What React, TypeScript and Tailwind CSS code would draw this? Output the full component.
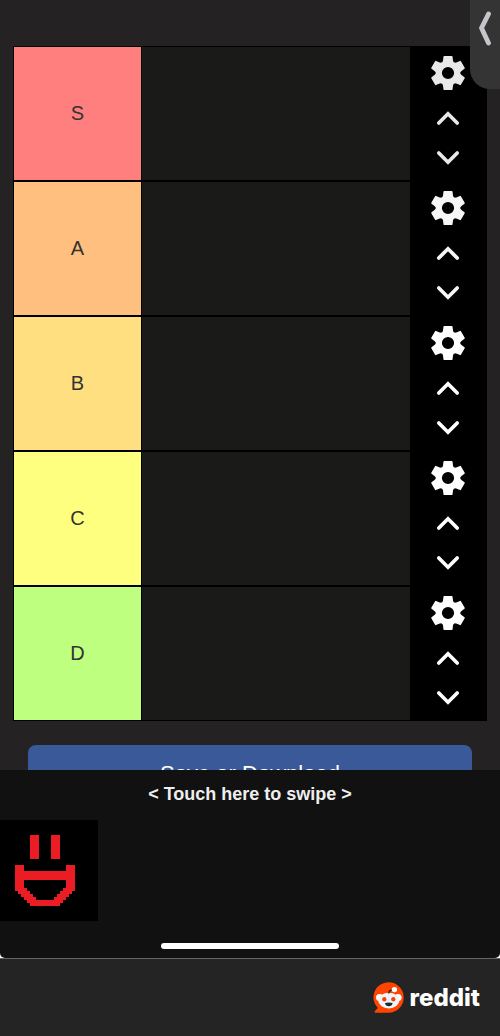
interface Tier {
  name: string
  color: string
  iconColor: string
}

const TIERS: Tier[] = [
  { name: 'S', color: 'bg-[#ff7f7e]', iconColor: 'text-[#e9e9e9]' },
  { name: 'A', color: 'bg-[#ffbf7f]', iconColor: 'text-[#f6f6f6]' },
  { name: 'B', color: 'bg-[#ffdf80]', iconColor: 'text-white' },
  { name: 'C', color: 'bg-[#feff7f]', iconColor: 'text-white' },
  { name: 'D', color: 'bg-[#beff7f]', iconColor: 'text-white' },
]

const GEAR_TEETH = [0, 60, 120, 180, 240, 300]

function Gear() {
  return (
    <svg width="42" height="42" viewBox="-21 -21 42 42" fill="currentColor">
      <circle r="9.2" fill="none" stroke="currentColor" strokeWidth="6.2" />
      {GEAR_TEETH.map((angle) => (
        <path
          key={angle}
          transform={`rotate(${angle})`}
          d="M-3.8 -17.1H3.8Q4.4 -17.1 4.5 -16.4L5 -12.4L6 -9.5H-6L-5 -12.4L-4.5 -16.4Q-4.4 -17.1 -3.8 -17.1Z"
        />
      ))}
    </svg>
  )
}

function Chevron({ points }: { points: string }) {
  return (
    <svg width="24" height="16" viewBox="0 0 24 16" fill="none" stroke="currentColor" strokeWidth="3.7" strokeLinecap="round">
      <polyline points={points} />
    </svg>
  )
}

function TierRow({ tier }: { tier: Tier }) {
  return (
    <div className="flex h-[133px]">
      <div className={`flex w-[127px] shrink-0 items-center justify-center pb-0.5 text-xl text-[#333] ${tier.color}`}>
        {tier.name}
      </div>
      <div className="ml-px flex-1 bg-[#1a1a18]" />
      <div className={`flex w-[76px] shrink-0 flex-col items-center bg-black pt-[5px] ${tier.iconColor}`}>
        <button aria-label={`Settings for ${tier.name}`} className="mb-1">
          <Gear />
        </button>
        <button aria-label={`Move ${tier.name} up`} className="flex h-10 w-10 items-center justify-center">
          <Chevron points="2.8,13 12,3.8 21.2,13" />
        </button>
        <button aria-label={`Move ${tier.name} down`} className="flex h-10 w-10 items-center justify-center">
          <Chevron points="2.8,3 12,12.2 21.2,3" />
        </button>
      </div>
    </div>
  )
}

function Smiley() {
  return (
    <svg width="98" height="101" viewBox="0 820 98 101" fill="#ec1c24" className="bg-black">
      <rect x="30" y="835" width="9" height="24" />
      <rect x="51" y="835" width="9" height="24" />
      <path
        fillRule="evenodd"
        d="M15 865H24V871H66V865H75V891H72V894H69V897H66V900H63V903H60V906H30V903H27V900H24V897H21V894H18V891H15Z
           M24 880V888H27V891H30V894H33V897H36V900H54V897H57V894H60V891H63V888H66V880Z"
      />
    </svg>
  )
}

function RedditMark() {
  return (
    <svg width="31" height="31" viewBox="0 0 31 31">
      <path d="M15.5 0.3A15.1 15.1 0 1 1 15.5 30.7H2.6C1.6 30.7 1.2 29.6 1.9 28.9L4.8 26A15.1 15.1 0 0 1 15.5 0.3Z" fill="#ff4500" />
      <circle cx="6.6" cy="15.5" r="3.6" fill="#fff" />
      <circle cx="25" cy="15.5" r="3.6" fill="#fff" />
      <ellipse cx="15.8" cy="18.6" rx="10.6" ry="7.8" fill="#eef4f8" />
      <path d="M15.8 11.4C15.8 9 17.4 7.8 20 7.6" fill="none" stroke="#1c1c1c" strokeWidth="1.3" />
      <circle cx="21.4" cy="7.6" r="2.7" fill="#fff" />
      <ellipse cx="11.3" cy="17.3" rx="2.1" ry="2.3" fill="#f5410a" />
      <ellipse cx="20.3" cy="17.3" rx="2.1" ry="2.3" fill="#f5410a" />
      <path d="M12 20.9Q15.8 20.2 19.6 20.9Q19 24.2 15.8 24.2Q12.6 24.2 12 20.9Z" fill="#1b2a33" />
    </svg>
  )
}

export default function App() {
  return (
    <div className="relative flex h-screen flex-col bg-[#242223] font-['Liberation_Sans',Arial,sans-serif]">
      <main className="min-h-0 flex-1 overflow-hidden px-[13px] pt-[46px]">
        <div className="flex flex-col gap-0.5 border border-black bg-black">
          {TIERS.map((tier) => (
            <TierRow key={tier.name} tier={tier} />
          ))}
        </div>
        <div className="px-[15px] pt-6">
          <button className="h-14 w-full rounded-lg bg-[#3a5998] text-[22px] text-white">Save or Download</button>
        </div>
      </main>

      {/* Image tray */}
      <div className="bg-white">
        <section className="flex h-[188px] flex-col rounded-b-[5px] bg-[#111]">
          <p className="flex h-[50px] items-center justify-center pb-0.5 text-lg font-bold text-[#eee]">&lt; Touch here to swipe &gt;</p>
          <Smiley />
          <div className="mx-auto mt-[22px] h-1.5 w-[178px] rounded-full bg-white" />
        </section>
      </div>

      <footer className="flex h-[78px] items-center justify-end gap-1.5 border-t border-[#666] bg-[#242424] pr-5">
        <RedditMark />
        <span className="font-['Inter',sans-serif] text-2xl font-extrabold text-white">reddit</span>
      </footer>

      {/* Drawer handle */}
      <button
        aria-label="Open drawer"
        className="absolute top-0 right-0 flex h-[89px] w-[30px] justify-center rounded-bl-[20px] bg-[#343435] pt-2.5 text-[#c6c5cb]"
      >
        <svg width="14" height="36" viewBox="0 0 14 36" fill="none" stroke="currentColor" strokeWidth="4.8" strokeLinecap="round" strokeLinejoin="round">
          <polyline points="10.5,4 3.5,18 10.5,33" />
        </svg>
      </button>
    </div>
  )
}
